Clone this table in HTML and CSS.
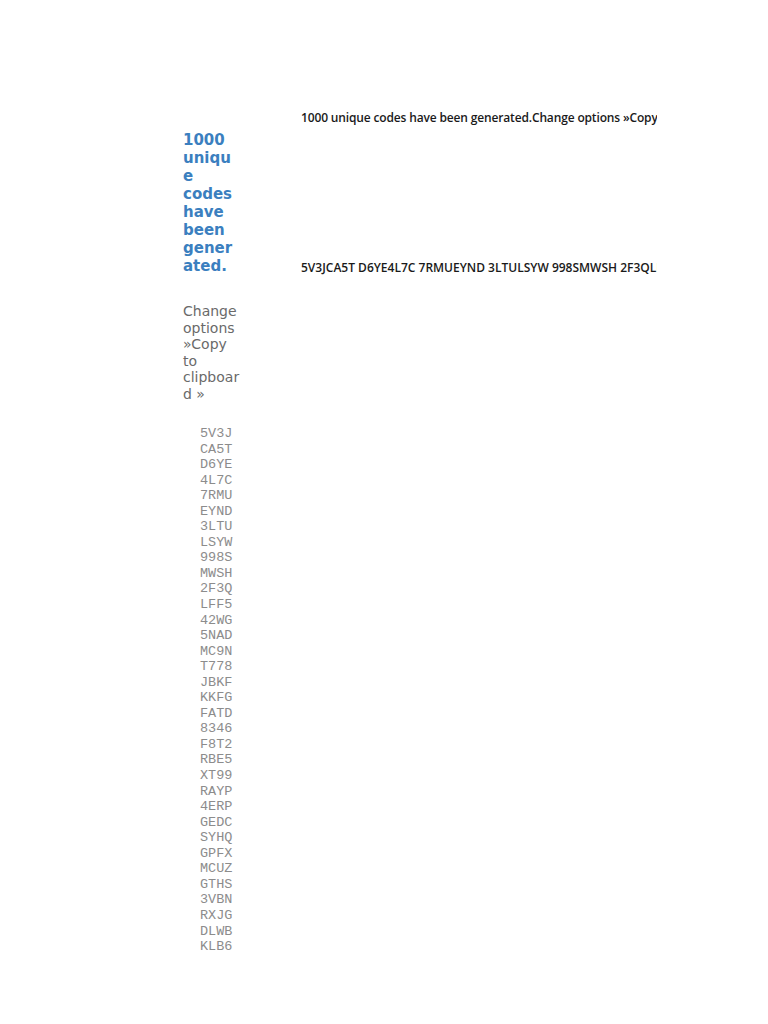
FILE: index.html
```html
<!DOCTYPE html>
<html>
<head>
<meta charset="utf-8">
<link rel="stylesheet" href="styles.css">
</head>
<body>
<div class="page">
  <div class="left">
    <h1 class="title">1000 unique codes have been generated.</h1>
    <p class="links">Change options »Copy to clipboard »</p>
    <p class="codes">5V3JCA5T D6YE4L7C 7RMUEYND 3LTULSYW 998SMWSH 2F3QLFF5 42WG5NAD MC9NT778 JBKFKKFG FATD8346 F8T2RBE5 XT99RAYP 4ERPGEDC SYHQGPFX MCUZGTHS 3VBNRXJG DLWBKLB6</p>
  </div>
  <div class="right">
    <p class="r-title">1000 unique codes have been generated.Change options »Copy to clipboard »</p>
    <p class="r-codes">5V3JCA5T D6YE4L7C 7RMUEYND 3LTULSYW 998SMWSH 2F3QLFF5 42WG5NAD MC9NT778 JBKFKKFG</p>
  </div>
</div>
</body>
</html>
```
FILE: styles.css
```css
html, body {
  margin: 0;
  padding: 0;
  background: #ffffff;
}
.page {
  display: flex;
  align-items: flex-start;
  padding: 110px 0 0 183px;
}
.left {
  width: 57px;
  flex-shrink: 0;
  margin-top: 21px;
  overflow-wrap: anywhere;
}
.title {
  margin: 0;
  font-family: "DejaVu Sans", sans-serif;
  font-weight: bold;
  font-size: 15px;
  line-height: 18px;
  color: #3b7fbf;
}
.links {
  margin: 28px 0 0;
  font-family: "DejaVu Sans", sans-serif;
  font-size: 14px;
  line-height: 16.5px;
  color: #6a6a6a;
}
.codes {
  margin: 24px 0 0 17px;
  width: 38px;
  word-break: break-all;
  font-family: "Liberation Mono", monospace;
  font-size: 13.5px;
  line-height: 15.55px;
  color: #8c8c8c;
}
.right {
  margin-left: 61px;
  width: 356px;
  flex-shrink: 0;
  overflow: hidden;
  white-space: nowrap;
  font-family: "Open Sans", sans-serif;
  font-weight: 600;
  color: #1a1a1a;
}
.r-title {
  margin: 0;
  font-size: 12px;
  line-height: 16px;
  letter-spacing: -0.15px;
}
.r-codes {
  margin: 134px 0 0;
  font-size: 12px;
  line-height: 16px;
}
```
